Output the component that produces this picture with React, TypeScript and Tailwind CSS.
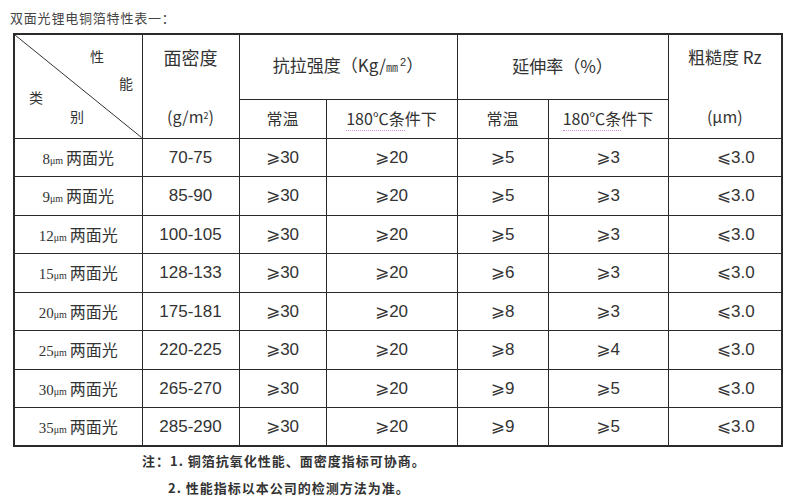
import React from "react";

const rows = [
  { t: "8", d: "70-75", a: "30", b: "20", c: "5", e: "3", r: "3.0" },
  { t: "9", d: "85-90", a: "30", b: "20", c: "5", e: "3", r: "3.0" },
  { t: "12", d: "100-105", a: "30", b: "20", c: "5", e: "3", r: "3.0" },
  { t: "15", d: "128-133", a: "30", b: "20", c: "6", e: "3", r: "3.0" },
  { t: "20", d: "175-181", a: "30", b: "20", c: "8", e: "3", r: "3.0" },
  { t: "25", d: "220-225", a: "30", b: "20", c: "8", e: "4", r: "3.0" },
  { t: "30", d: "265-270", a: "30", b: "20", c: "9", e: "5", r: "3.0" },
  { t: "35", d: "285-290", a: "30", b: "20", c: "9", e: "5", r: "3.0" },
];

const CJK = "font-['Noto_Sans_CJK_SC','DejaVu_Sans',sans-serif]";
const LAT = "font-['Liberation_Sans','Noto_Sans_CJK_SC',sans-serif]";
const DJV = "font-['DejaVu_Sans',sans-serif]";
const SER = "font-['Liberation_Serif',serif]";

function Ge({ v }: { v: string }) {
  return (
    <span className={`inline-flex items-baseline text-[17px] ${LAT}`}>
      <span className={DJV}>⩾</span>
      <span>{v}</span>
    </span>
  );
}

function Corner() {
  return (
    <>
      <svg className="absolute inset-0 w-full h-full" preserveAspectRatio="none" viewBox="0 0 100 100">
        <line x1="0" y1="0" x2="100" y2="100" stroke="#333" strokeWidth="1" vectorEffect="non-scaling-stroke" />
      </svg>
      <span className={`absolute left-[75px] top-[14px] text-[14px] leading-none ${CJK}`}>性</span>
      <span className={`absolute left-[104px] top-[41px] text-[14px] leading-none ${CJK}`}>能</span>
      <span className={`absolute left-[14px] top-[55px] text-[14px] leading-none ${CJK}`}>类</span>
      <span className={`absolute left-[55px] top-[74px] text-[14px] leading-none ${CJK}`}>别</span>
    </>
  );
}

function Hot() {
  return (
    <span className={`text-[16px] ${CJK}`}>
      <span className="border-b border-dotted border-[#d58ad5]">180℃条</span>件下
    </span>
  );
}

export default function App() {
  const cell = "border border-[#2a2a2a] text-center align-middle p-0";
  return (
    <div className="w-[800px] h-[497px] bg-white text-[#333] overflow-hidden">
      <div className={`pt-[10px] pl-[10px] text-[13px] leading-[16px] tracking-[0.8px] text-[#444] ${CJK}`}>
        双面光锂电铜箔特性表一：
      </div>
      <div className="pl-[13px] pt-[7px]">
        <table className="w-[768px] border-collapse table-fixed border-2 border-[#2a2a2a]">
          <colgroup>
            <col className="w-[128px]" />
            <col className="w-[97px]" />
            <col className="w-[87px]" />
            <col className="w-[131px]" />
            <col className="w-[91px]" />
            <col className="w-[120px]" />
            <col className="w-[114px]" />
          </colgroup>
          <thead>
            <tr className="h-[65px]">
              <td rowSpan={2} className={`${cell} relative`}>
                <Corner />
              </td>
              <td rowSpan={2} className={cell}>
                <div className="flex flex-col items-center justify-between h-[92px] py-[6px]">
                  <span className={`text-[18px] leading-[22px] ${CJK}`}>面密度</span>
                  <span className={`text-[16px] leading-[20px] ${CJK}`}>
                    (g/m<span className="text-[9px] align-top">2</span>)
                  </span>
                </div>
              </td>
              <td colSpan={2} className={cell}>
                <span className={`text-[17px] leading-[22px] ${CJK}`}>
                  抗拉强度（Kg/<span className="text-[12px]">㎜</span>
                  <span className={`text-[11px] relative -top-[6px] ml-[2px] ${LAT}`}>2</span>）
                </span>
              </td>
              <td colSpan={2} className={cell}>
                <span className={`text-[17px] leading-[22px] ${CJK}`}>延伸率（%）</span>
              </td>
              <td rowSpan={2} className={cell}>
                <div className="flex flex-col items-center justify-between h-[92px] py-[6px]">
                  <span className={`text-[17px] leading-[22px] ${CJK}`}>粗糙度 Rz</span>
                  <span className={`text-[16px] leading-[20px] ${CJK}`}>(μm)</span>
                </div>
              </td>
            </tr>
            <tr className="h-[39px]">
              <td className={cell}>
                <span className={`text-[16px] ${CJK}`}>常温</span>
              </td>
              <td className={cell}>
                <Hot />
              </td>
              <td className={cell}>
                <span className={`text-[16px] ${CJK}`}>常温</span>
              </td>
              <td className={cell}>
                <Hot />
              </td>
            </tr>
          </thead>
          <tbody>
            {rows.map((r) => (
              <tr key={r.t} className="h-[38.5px]">
                <td className={cell}>
                  <span className="inline-flex items-baseline">
                    <span className={`text-[15px] ${SER}`}>{r.t}</span>
                    <span className={`text-[10px] mr-[3px] ${SER}`}>μm</span>
                    <span className={`text-[16px] ${CJK}`}>两面光</span>
                  </span>
                </td>
                <td className={cell}>
                  <span className={`text-[17px] ${LAT}`}>{r.d}</span>
                </td>
                <td className={cell}>
                  <Ge v={r.a} />
                </td>
                <td className={cell}>
                  <Ge v={r.b} />
                </td>
                <td className={cell}>
                  <Ge v={r.c} />
                </td>
                <td className={cell}>
                  <Ge v={r.e} />
                </td>
                <td className={`${cell} pl-[22px]`}>
                  <span className={`text-[17px] inline-flex items-baseline ${LAT}`}>
                    <span className={DJV}>⩽</span>
                    <span>{r.r}</span>
                  </span>
                </td>
              </tr>
            ))}
          </tbody>
        </table>
      </div>
      <div className={`pl-[142px] pt-0 text-[13px] leading-[27px] tracking-[1px] font-bold text-[#333] ${CJK}`}>
        <div>注：1. 铜箔抗氧化性能、面密度指标可协商。</div>
        <div className="pl-[26px]">2. 性能指标以本公司的检测方法为准。</div>
      </div>
    </div>
  );
}
